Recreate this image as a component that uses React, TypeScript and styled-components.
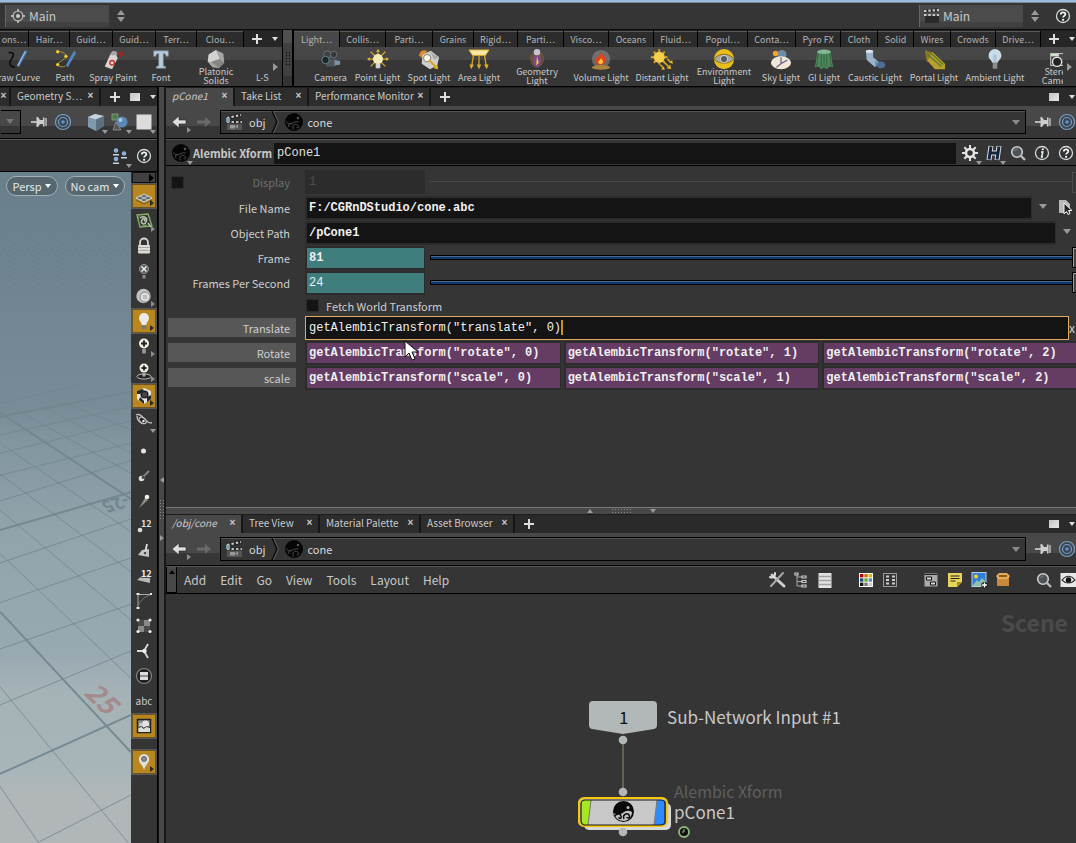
import React from "react";
import styled, { createGlobalStyle, css } from "styled-components";

const sans = '"Noto Sans CJK SC", "Open Sans", sans-serif';
const mono = '"Liberation Mono", "DejaVu Sans Mono", monospace';

const GlobalStyle = createGlobalStyle`
  * { box-sizing: border-box; }
  body { margin: 0; background: #353535; color: #c8c8c8; font-family: ${sans}; font-size: 11px; overflow: hidden; }
  button, input, select { font: inherit; color: inherit; border: 0; padding: 0; margin: 0; background: none; outline: none; border-radius: 0; }
  svg { display: block; flex: none; }
`;

/* ---------- icons ---------- */

const art: Record<string, React.ReactNode> = {
  gear: (
    <g fill="none" stroke="#e4e4e4">
      <circle cx="12" cy="12" r="4" strokeWidth="2.600" />
      <path strokeWidth="2" d="M12 4v4M12 16v4M4 12h4M16 12h4M6.300 6.300l3 3M14.700 14.700l3 3M17.700 6.300l-3 3M9.300 14.700l-3 3" />
      <circle cx="12" cy="12" r="1.600" fill="#333" stroke="none" />
    </g>
  ),
  desktop: (
    <g fill="none" stroke="#b4b4b4">
      <circle cx="12" cy="12" r="5" strokeWidth="1.200" />
      <circle cx="12" cy="12" r="2" fill="#ccc" stroke="none" />
      <path strokeWidth="1.800" d="M12 5v3M12 16v3M5 12h3M16 12h3" />
    </g>
  ),
  clapper: (
    <g>
      <path d="M4 11h15v9H4z" fill="#555" />
      <path d="M4 8l14-3" stroke="#222" strokeWidth="3.500" />
      <path d="M4 8l14-3" stroke="#ccc" strokeWidth="2" strokeDasharray="2.500 2" />
      <path d="M4 12h15" stroke="#222" strokeWidth="3" />
      <path d="M4 12h15" stroke="#bbb" strokeWidth="1.800" strokeDasharray="2.500 2" />
      <rect x="7" y="15" width="5" height="3.500" fill="#999" />
      <path d="M12 16.500l3-2v4z" fill="#999" />
      <rect x="3" y="8" width="4" height="4" fill="#7f9fae" />
    </g>
  ),
  slate: (
    <g>
      <path d="M5 12h14v7H5z" fill="#2a2a2a" />
      <path d="M4 7l14-1" stroke="#222" strokeWidth="3" />
      <path d="M4 7l15-1M4 11h15" stroke="#c8c8c8" strokeWidth="2.200" strokeDasharray="2.500 1.800" />
    </g>
  ),
  help: (
    <g>
      <circle cx="12" cy="12" r="6.500" fill="#2e3335" stroke="#d8d8d8" strokeWidth="1.300" />
      <path d="M9.800 10.500c0-3 4.600-2.800 4.500-.2 0 1.600-2.200 1.600-2.200 3.300" stroke="#f2f2f2" strokeWidth="1.800" fill="none" />
      <circle cx="12.100" cy="15.800" r="1.100" fill="#f2f2f2" />
    </g>
  ),
  info: (
    <g>
      <circle cx="12" cy="12" r="6.500" fill="#2e3335" stroke="#d8d8d8" strokeWidth="1.300" />
      <path d="M11 11h1.800l-1.200 5h1.400" stroke="#f2f2f2" strokeWidth="1.500" fill="none" />
      <circle cx="12.800" cy="8.300" r="1.100" fill="#f2f2f2" />
    </g>
  ),
  search: (
    <g>
      <path d="M15 15l4 4" stroke="#bbb" strokeWidth="2.400" />
      <circle cx="11" cy="11" r="5.300" fill="#4d5459" stroke="#cfcfcf" strokeWidth="1.600" />
      <path d="M8.500 10a3 3 0 0 1 3-2" stroke="#889" fill="none" />
    </g>
  ),
  houdini: (
    <g>
      <path d="M9 5L7 19M17 5l-2 14M8 12h8" stroke="#dde1e8" strokeWidth="5" fill="none" />
      <path d="M9 5.500L7 18.500M17 5.500l-2 13M8 12h8" stroke="#15243f" strokeWidth="3" fill="none" />
    </g>
  ),
  pin: (
    <g>
      <path d="M4 12h6" stroke="#ddd" strokeWidth="1.500" />
      <path d="M9.500 7h1.500l2 3h3V7.500h1.500v9H16V14h-3l-2 3H9.500z" fill="#cdcdcd" />
      <path d="M19 8v8" stroke="#bbb" strokeWidth="1.500" />
    </g>
  ),
  target: (
    <g fill="none" stroke="#7aa0c4">
      <circle cx="12" cy="12" r="7.500" strokeWidth="1.200" fill="#3c4650" />
      <circle cx="12" cy="12" r="4.500" strokeWidth="1.200" />
      <circle cx="12" cy="12" r="1.800" fill="#5b94d6" stroke="none" />
    </g>
  ),
  back: <path d="M4 12l7-6v4h7v4h-7v4z" fill="#dedede" stroke="#222" strokeWidth=".6" />,
  forward: <path d="M19 12l-6-5v3.500H5v3h8V17z" fill="#6a6a6a" />,
  alembic: (
    <g>
      <circle cx="12" cy="12" r="9" fill="#050505" />
      <circle cx="16" cy="8" r="1.200" fill="#5a5a5a" />
      <path d="M4.500 11.500c1 3 3 2.500 5 2s4-2.500 7-1.500M7 17c-1.500-2.500.5-4 2.500-3M11.500 19.500c-2-3.500 1-6.500 4-4.500s0 4-1 2" stroke="#4c4c4c" fill="none" />
    </g>
  ),
  cube: (
    <g>
      <path d="M4 7l7-3 9 2v10l-8 5-8-4z" fill="#7f9aab" />
      <path d="M4 7l8 2.500 8-3.500-9-2z" fill="#c3d2dc" />
      <path d="M12 9.500v11.500l8-5V6z" fill="#5b7182" />
    </g>
  ),
  shapes: (
    <g>
      <rect x="4" y="4" width="6" height="6" fill="#4c7a4a" stroke="#89a886" strokeWidth=".8" />
      <path d="M5 20l3-8 5 8z" fill="#555" stroke="#999" strokeWidth=".8" />
      <circle cx="14" cy="12" r="5.500" fill="#5c86b4" />
      <circle cx="12.500" cy="10" r="2" fill="#a9c6e4" />
    </g>
  ),
  whiteSquare: <rect x="4.500" y="4.500" width="15" height="15" fill="#dcdcdc" />,
  people: (
    <g fill="#8fb0d4">
      <circle cx="8" cy="6.500" r="2.300" />
      <circle cx="8" cy="15" r="2.300" />
      <circle cx="16" cy="9.500" r="2.300" />
      <path d="M5 10h6v1.500H5zM5 18.500h6V20H5zM13 13h6v1.500h-6z" fill="#c5d5e6" />
    </g>
  ),
  grid3d: (
    <g fill="none" stroke="#d8dad6">
      <path d="M4 14l8-4 8 4-8 4z" fill="#5e6a70" />
      <path d="M8 12l8 4M16 12l-8 4" strokeWidth=".8" />
      <path d="M4 16l8 4 8-4" stroke="#6b5a30" />
    </g>
  ),
  green: (
    <g fill="none">
      <path d="M5 6l11-1 4 12-12 1z" stroke="#84b06c" strokeWidth="1.300" />
      <path d="M8 9c4-3 8 0 6 4s-6 1-4-2 4 0 2 1M16 14l3 4" stroke="#b8c8ae" strokeWidth="1.500" />
      <path d="M7 7l-1 5M10 17l5-1" stroke="#6f9a58" />
    </g>
  ),
  lock: (
    <g>
      <path d="M8 12V8.500a4 4 0 0 1 8 0V12" fill="none" stroke="#d5d5d5" strokeWidth="1.800" />
      <rect x="6" y="11" width="12" height="8.500" rx="1" fill="#dedbd5" />
      <path d="M6 13.500h12M6 16.500h12" stroke="#9b9993" strokeWidth=".8" />
    </g>
  ),
  bulbOff: (
    <g>
      <circle cx="12" cy="10" r="4.500" fill="#525a5e" stroke="#999" />
      <path d="M9.500 7.500l5 5M14.500 7.500l-5 5" stroke="#eee" strokeWidth="1.600" />
      <path d="M10.500 16h3v3.500h-3z" fill="#888" />
    </g>
  ),
  sphere: (
    <g>
      <circle cx="11.500" cy="12" r="7.200" fill="#bfc3c3" />
      <circle cx="13" cy="13" r="5" fill="#ddd" stroke="#777" strokeWidth=".8" />
      <path d="M12 11v4M14 11v4" stroke="#999" />
    </g>
  ),
  bulb: (
    <g>
      <path d="M12 4a5 5 0 0 0-5 5c0 3 2.500 4 2.800 7h4.400c.3-3 2.800-4 2.800-7a5 5 0 0 0-5-5z" fill="#eceae6" />
      <path d="M10 16.500h4v3.500h-4z" fill="#777" />
    </g>
  ),
  bulbPlus: (
    <g>
      <circle cx="12" cy="9.500" r="5" fill="#eeecdc" />
      <path d="M12 6.500v6M9 9.500h6" stroke="#222" strokeWidth="2" />
      <path d="M10.200 15h3.600v4.500h-3.600z" fill="#999" />
    </g>
  ),
  bulbBase: (
    <g>
      <ellipse cx="12" cy="17.500" rx="7" ry="2.500" fill="#222" stroke="#bbb" />
      <circle cx="12" cy="9" r="4.500" fill="#eeecdc" />
      <path d="M12 6.500v5M9.500 9h5" stroke="#222" strokeWidth="1.800" />
      <path d="M10.500 14h3v3.500h-3z" fill="#aaa" />
    </g>
  ),
  ball: (
    <g>
      <path d="M12 4l7 3v8l-7 5-7-5V7z" fill="#e6e6e6" />
      <path d="M5 7l5-2 2 1-4 4-3 0zM19 11v4l-4 3v-5zM8 13l4 4v3l-5-4z" fill="#262626" />
      <circle cx="12.500" cy="10.500" r="3.300" fill="#444" stroke="#222" strokeWidth="1.500" />
    </g>
  ),
  ghost: (
    <g fill="none" stroke="#bbb" strokeWidth="1.300">
      <path d="M4 6c4-2 7 2 9 5 2 2 4 3 7 3M5 7c0 5 5 9 9 7" />
      <ellipse cx="11" cy="11.500" rx="4" ry="2.500" fill="#222" transform="rotate(35 11 11)" />
      <circle cx="11.500" cy="12" r="1.200" fill="#eee" stroke="none" />
    </g>
  ),
  point: <circle cx="11.500" cy="12" r="2.500" fill="#e4e4e4" />,
  normal: (
    <g>
      <path d="M9 15l8-8" stroke="#7f8686" strokeWidth="2" />
      <circle cx="9.500" cy="14.500" r="2.800" fill="#ddd" />
      <circle cx="11" cy="13.500" r="1.400" fill="#444" />
    </g>
  ),
  trail: (
    <g>
      <path d="M7 19l6-10 3 2z" fill="#8f908c" />
      <circle cx="15" cy="8" r="2.300" fill="#f0eee4" />
    </g>
  ),
  num: (
    <g>
      <text x="9" y="13" fontSize="9" fontWeight="700" fill="#ddd">12</text>
      <circle cx="8" cy="16" r="2.300" fill="#ddd" />
    </g>
  ),
  prim: (
    <g>
      <path d="M6 16l4-5 7-1v8z" fill="#c2c2be" />
      <path d="M13 14l2-9" stroke="#dcdcdc" strokeWidth="1.800" />
      <circle cx="13" cy="14" r="1.200" fill="#444" />
    </g>
  ),
  primNum: (
    <g>
      <path d="M5 16l6-5 7 0v8z" fill="#b8b8b4" />
      <text x="9" y="13" fontSize="9" fontWeight="700" fill="#eee" stroke="#353535" strokeWidth="1.500" paintOrder="stroke">12</text>
    </g>
  ),
  curve: (
    <g fill="none" stroke="#aaa">
      <path d="M6 19V5.500h13" />
      <path d="M6 17c2-5 6-9 12-11" stroke="#6f7a74" />
      <path d="M4.500 18h3v2h-3zM4.500 4h3v2h-3zM18 4h2v2h-2z" fill="#e8e8e8" stroke="none" />
    </g>
  ),
  hull: (
    <g>
      <rect x="6" y="6" width="12" height="12" fill="#4a4a4a" />
      <path d="M12 6h6v6h-6zM6 12h6v6H6z" fill="#8a8a8a" />
      <g fill="#eee">
        <circle cx="6" cy="6" r="1.600" /><circle cx="18" cy="6" r="1.600" />
        <circle cx="6" cy="17.500" r="1.600" /><circle cx="18" cy="17.500" r="1.600" />
      </g>
    </g>
  ),
  axes: (
    <g stroke="#d8d8d0" strokeWidth="1.800">
      <path d="M12 12H5M12 12l4-7M12 12l4 7" />
      <circle cx="12.500" cy="12" r="2.200" fill="#eee" stroke="none" />
    </g>
  ),
  list: (
    <g>
      <circle cx="12" cy="12" r="7.500" fill="#222" stroke="#7d857d" strokeWidth="1.200" />
      <path d="M8 8h8v8H8z" fill="#dcdcdc" />
      <path d="M8 12h8" stroke="#777" strokeWidth="1.500" />
    </g>
  ),
  photo: (
    <g>
      <rect x="5.500" y="5.500" width="13" height="13" fill="#8d8d8a" stroke="#222" strokeWidth="1.500" />
      <circle cx="13.500" cy="10" r="3.500" fill="#e4e4e4" />
      <circle cx="9" cy="11" r="2" fill="#ccc" />
      <path d="M6.500 13.500l3-1 2 2 3-2 3.500 1V18h-11.500z" fill="#dcdcd8" />
      <path d="M6.500 13.500l3-1 2 2 3-2 3.500 1" stroke="#333" fill="none" />
    </g>
  ),
  marker: (
    <g>
      <path d="M12 4a5.200 5.200 0 0 0-5.200 5.200C6.800 13 11 15 12 20c1-5 5.200-7 5.200-10.800A5.200 5.200 0 0 0 12 4z" fill="#e0e0de" />
      <circle cx="12" cy="9" r="2.500" fill="#8d8d89" stroke="#555" strokeWidth=".8" />
    </g>
  ),
  fileChooser: (
    <g>
      <path d="M7 4h7l4 4v9H7z" fill="#b9b9b9" />
      <path d="M12 7v11l2.500-2.500 1.500 3 2-1-1.500-3H20z" fill="#222" stroke="#f2f2f2" />
    </g>
  ),
  tools: (
    <g fill="none" strokeLinecap="round">
      <path d="M7 7l12 11" stroke="#d0d0d0" strokeWidth="3" />
      <path d="M18 5L6 18" stroke="#a8aaa8" strokeWidth="2" />
      <path d="M5 9a3.500 3.500 0 0 0 5-4" stroke="#e0e0e0" strokeWidth="2" />
    </g>
  ),
  tree: (
    <g fill="none" stroke="#aaa">
      <path d="M8 7v11M8 9h5M8 13.500h5M8 18h5" />
      <path d="M6 5h3v2H6zM13 8h4v2h-4zM13 12.500h4v2h-4zM13 17h4v2h-4z" strokeWidth="1.200" stroke="#ccc" />
    </g>
  ),
  lines: (
    <g>
      <rect x="5.500" y="5" width="13" height="15" fill="#e2e2e2" />
      <path d="M5.500 8.500h13M5.500 12.500h13M5.500 16.500h13" stroke="#a2a2a2" strokeWidth="1.500" />
    </g>
  ),
  palette: (
    <g>
      <rect x="5" y="5" width="14" height="14" fill="#fff" />
      {["#b00", "#d86a10", "#d8b800", "#234a80", "#68b020", "#5c8cc0", "#111", "#777", "#ccc"].map((c, i) => (
        <rect key={i} x={6 + (i % 3) * 4.3} y={6 + Math.floor(i / 3) * 4.3} width="3.400" height="3.400" fill={c} />
      ))}
    </g>
  ),
  table: (
    <g fill="none">
      <rect x="5.500" y="5.500" width="13" height="13" stroke="#999" />
      <path d="M8 8.500h3M14 8.500h3M8 12h3M14 12h3M8 15.500h3M14 15.500h3" stroke="#ccc" strokeWidth="2" />
    </g>
  ),
  netbox: (
    <g>
      <rect x="5.500" y="5.500" width="13" height="13" fill="#aaa" />
      <path d="M5.500 6.500h13" stroke="#222" />
      <path d="M7.500 9h5v3h-5zM11.500 14h5v3h-5z" fill="#ddd" stroke="#111" />
    </g>
  ),
  note: (
    <g>
      <path d="M5 5h14v9l-5 5H5z" fill="#e8d35c" />
      <path d="M19 14h-5v5z" fill="#a88c20" />
      <path d="M7.500 8h9M7.500 10.500h9M7.500 13h5" stroke="#222" strokeWidth="1.200" />
    </g>
  ),
  image: (
    <g>
      <rect x="5" y="4.500" width="14" height="14" fill="#2f7ed8" stroke="#bcd" />
      <circle cx="9" cy="8.500" r="2" fill="#f4d22a" />
      <path d="M6 17l4-5 2 2 3-4 3 3v5H6z" fill="#8fbfae" />
      <path d="M17.500 14v6M14.500 17h6" stroke="#111" strokeWidth="3.500" />
      <path d="M17.500 14.500v5M15 17h5" stroke="#fff" strokeWidth="1.500" />
    </g>
  ),
  box: (
    <g>
      <path d="M6 10h12v8H6z" fill="#c88a3a" />
      <path d="M5 8l3-3h8l3 3-2 3H7z" fill="#e2ac5c" />
      <path d="M8 7h8v2H8z" fill="#8a5a1c" />
    </g>
  ),
  eye: (
    <g>
      <rect x="4.500" y="5" width="16" height="14" fill="#e8e8e8" />
      <path d="M6 12c4-5 9-5 13 0-4 4-9 4-13 0z" fill="#fff" stroke="#333" strokeWidth="1.200" />
      <circle cx="12.500" cy="12" r="2.800" fill="#111" />
    </g>
  ),
  /* shelf tools */
  drawCurve: (
    <g fill="none">
      <path d="M4 4c8-1 5 4 3 7s-4 8 4 9" stroke="#0c0c0c" strokeWidth="1.800" />
      <path d="M23 2L14 19" stroke="#4f88c4" strokeWidth="3" />
      <path d="M22 3L14 18" stroke="#a9cbee" />
    </g>
  ),
  path: (
    <g fill="none">
      <path d="M4 3c6-1 12 4 7 8s-7 4-7 6 4 3 8 2" stroke="#b49a3a" />
      <path d="M23 3l-9 16" stroke="#4f88c4" strokeWidth="3" />
      <g fill="#f2cf22"><circle cx="4" cy="3" r="1.800" /><circle cx="13" cy="8" r="1.800" /><circle cx="4" cy="17" r="1.800" /></g>
    </g>
  ),
  spray: (
    <g>
      <path d="M9 6l6-1 2 5-6 12-8-3z" fill="#d8d6d2" />
      <path d="M9 5l3-3 4 1 1 3-6 1z" fill="#a6a6a6" />
      <path d="M17 4l7-1-3 7z" fill="#a82420" />
      <circle cx="11" cy="15" r="2.500" fill="none" stroke="#c2332c" strokeWidth="1.500" />
    </g>
  ),
  font: <path d="M4 2h16v6h-2.500c0-2-1-3-3-3v13.500l2.500.5v2H7v-2l2.500-.5V5c-2 0-3 1-3 3H4z" fill="#b8cbd8" stroke="#6f8695" strokeWidth=".8" />,
  platonic: (
    <g>
      <path d="M12 1l8 4 1 10-6 6-7-1-5-6 1-8z" fill="#a5a6a4" />
      <path d="M12 1l4 10-9 3-4 0 1-8z" fill="#d2d3d0" />
      <path d="M16 11l5 4-6 6-8-7z" fill="#868785" />
    </g>
  ),
  lsystem: <path d="M8 4v4l2 3-3 3 2 3-2 3" stroke="#3a6fae" strokeWidth="2" fill="none" />,
  camera: (
    <g>
      <circle cx="8" cy="6" r="4" fill="#3b4146" stroke="#6d767c" />
      <circle cx="15" cy="6" r="3.500" fill="#31363a" stroke="#6d767c" />
      <path d="M5 11h12v8H7z" fill="#4d565d" />
      <path d="M16 12l6 1v4l-6 1z" fill="#7a96ab" />
      <circle cx="6" cy="12" r="4" fill="#1e2326" stroke="#6a8596" />
    </g>
  ),
  pointLight: (
    <g>
      <path d="M12 1v20M1 11h22M4 3l16 16M20 3L4 19" stroke="#d6ac2a" strokeWidth="1.300" />
      <path d="M12 0l2 3h-4zM0 11l3-2v4zM24 11l-3-2v4z" fill="#e2b82c" />
      <circle cx="12" cy="11" r="5.500" fill="#f4ecb8" />
      <path d="M9.500 16h5v5h-5z" fill="#d5d5cf" />
    </g>
  ),
  spotLight: (
    <g>
      <path d="M1 7c1-5 5-7 9-5l-5 8z" fill="#e08a2a" />
      <path d="M5 6l9-4 9 7-2 9-8 4-9-6z" fill="#cfd0cc" />
      <path d="M13 3l9 6-4 3z" fill="#a9aaa7" />
      <circle cx="10" cy="10" r="4" fill="#fbf8e6" stroke="#777" />
      <path d="M12 12l8 8" stroke="#d8a41c" strokeWidth="2" />
      <path d="M22 22l-5-1 4-4z" fill="#e8b828" />
    </g>
  ),
  areaLight: (
    <g>
      <path d="M1 1h22l-4 6H5z" fill="#f6e8a8" stroke="#d8aa22" />
      <path d="M6 7l-2 12M12 7v13M18 7l2 12" stroke="#d0a024" strokeWidth="1.500" />
      <path d="M1.500 17h5L3.500 22zM9.500 17h5L12 22zM17.500 17h5L20.500 22z" fill="#dcae2c" />
    </g>
  ),
  geoLight: (
    <g>
      <ellipse cx="12" cy="11" rx="8" ry="9" fill="#7a5c34" opacity=".6" />
      <circle cx="12" cy="3.500" r="3.500" fill="#c9c4d4" />
      <path d="M9 7h6l2 6-3 7h-4l-3-7z" fill="#7c4a86" />
      <path d="M12 8l2 7-3 3z" fill="#f0c648" />
    </g>
  ),
  volumeLight: (
    <g>
      <circle cx="12" cy="11" r="10" fill="#8a8a8a" opacity=".6" />
      <ellipse cx="12" cy="20" rx="10" ry="2.500" fill="#a8843c" />
      <path d="M12 3c1 4 6 5 5 10-1 6-10 6-11 0 0-3 2-4 2-6l2 2z" fill="#e4421a" />
      <path d="M12 10c1 2 3 3 2 5-1 2-5 2-5-1 0-1 2-2 3-4z" fill="#fbc842" />
    </g>
  ),
  distantLight: (
    <g>
      <path d="M9 0v17M0 9h18M3 3l12 12M15 3L3 15" stroke="#d8a41c" strokeWidth="2" />
      <circle cx="9" cy="9" r="6" fill="#f6cf48" />
      <path d="M14 14l5 5M18 11l4 4M10 17l4 4" stroke="#d8a41c" strokeWidth="1.800" />
      <path d="M22 22l-5-1 4-4zM24 16l-4-1 3-3zM15 23l-4-1 3-3z" fill="#e2b22a" />
    </g>
  ),
  envLight: (
    <g>
      <circle cx="12" cy="11" r="11" fill="#e8bd1c" />
      <path d="M1 11c5-7 17-7 22 0-5 6-17 6-22 0z" fill="#a8a8a2" stroke="#8f6a08" />
      <circle cx="12" cy="11" r="4" fill="#555a5c" stroke="#ddd" />
    </g>
  ),
  skyLight: (
    <g>
      <circle cx="13" cy="6" r="5" fill="#6d8ba4" />
      <circle cx="6" cy="5" r="3" fill="#f2a52a" />
      <ellipse cx="12" cy="15" rx="11" ry="7" fill="#eee8d4" />
      <path d="M12 16V9M12 16l7-4M12 16l-5 4" stroke="#7a5c96" strokeWidth="1.400" />
    </g>
  ),
  giLight: (
    <g>
      <path d="M5 3h14l3 17-4-1-3 3-3-2-3 2-3-3-4 1z" fill="#4f8a5c" />
      <path d="M9 5v15M15 5v15M12 5v14M6 5L4 19M18 5l2 14" stroke="#335f3e" />
      <ellipse cx="12" cy="3" rx="7.500" ry="2.500" fill="#86b892" />
    </g>
  ),
  causticLight: (
    <g>
      <path d="M2 2h8v7l6 5-4 6-9-8z" fill="#9bb4cc" />
      <ellipse cx="6" cy="2.500" rx="4" ry="1.800" fill="#dce8f2" />
      <path d="M12 13l9 1c4 3 2 8-4 7l-5-3z" fill="#5b86b8" opacity=".7" />
    </g>
  ),
  portalLight: (
    <g>
      <path d="M2 1l8 3v10H4z" fill="#8a7a22" />
      <path d="M10 3l14 13v6l-11 0-8-9z" fill="#b8a02c" />
      <path d="M5 6l15 13M9 5l13 12" stroke="#5a7a2a" strokeWidth="1.500" />
    </g>
  ),
  ambientLight: (
    <g>
      <path d="M12 0a7 7 0 0 0-7 7C5 11 8.500 12 9 15h6c.5-3 4-4 4-8a7 7 0 0 0-7-7z" fill="#c9dcea" />
      <path d="M9.500 15h5v6.500h-5z" fill="#8c8c88" />
      <path d="M11 6v9M13 6v9" stroke="#8fa4b4" strokeWidth=".8" />
    </g>
  ),
  stereo: (
    <g>
      <rect x="4" y="5" width="18" height="13" fill="#4c4c4c" stroke="#c8c8c8" />
      <path d="M4 5h9v3H4z" fill="#cfe0cc" />
      <circle cx="11" cy="14" r="5" fill="#222" stroke="#e2e2e2" strokeWidth="1.500" />
    </g>
  ),
};

const Icon = ({ name, size = 24 }: { name: string; size?: number }) => (
  <svg width={size} height={size} viewBox="0 0 24 24" aria-hidden="true">{art[name]}</svg>
);

/* ---------- shared parts ---------- */

const Triangle = styled.i<{ $dir?: "down" | "up" | "right" | "left"; $size?: number; $color?: string }>`
  width: 0;
  height: 0;
  flex: none;
  border: ${p => p.$size ?? 4}px solid transparent;
  ${p => {
    const c = p.$color ?? "#9a9a9a";
    const s = (p.$size ?? 4) + 1;
    switch (p.$dir) {
      case "up": return css`border-bottom: ${s}px solid ${c}; border-top: 0;`;
      case "right": return css`border-left: ${s}px solid ${c}; border-right: 0;`;
      case "left": return css`border-right: ${s}px solid ${c}; border-left: 0;`;
      default: return css`border-top: ${s}px solid ${c}; border-bottom: 0;`;
    }
  }}
`;

const IconSlot = styled.button<{ $on?: boolean }>`
  position: relative;
  display: flex;
  flex: none;
  align-items: center;
  justify-content: center;
  width: 24px;
  height: 24px;
  background: ${p => (p.$on ? "#b8871f" : "none")};
  ${p => p.$on && css`border: 1px solid #6b5426; box-shadow: 0 0 0 1px #595959;`}
`;

const Corner = styled.span<{ $side?: boolean }>`
  position: absolute;
  right: ${p => (p.$side ? "1px" : "0")};
  bottom: ${p => (p.$side ? "1px" : "0")};
  display: flex;
`;

const IconButton = ({ name, menu, side, on, dark }: { name: string; menu?: boolean; side?: boolean; on?: boolean; dark?: boolean }) => (
  <IconSlot type="button" aria-label={name} $on={on}>
    <Icon name={name} />
    {menu && <Corner><Triangle $size={3} /></Corner>}
    {side && <Corner $side><Triangle $dir="right" $size={3} $color={dark ? "#2a2a2a" : "#8f8f8f"} /></Corner>}
  </IconSlot>
);

const Plus = styled.button`
  width: 12px;
  height: 16px;
  flex: none;
  background:
    linear-gradient(#dedede, #dedede) center / 10px 2px no-repeat,
    linear-gradient(#dedede, #dedede) center / 2px 10px no-repeat;
`;

const DropButton = styled.button`
  display: flex;
  align-items: center;
  justify-content: center;
  flex: none;
  width: 18px;
  height: 20px;
`;

/* ---------- frame ---------- */

const Shell = styled.div`
  display: flex;
  flex-direction: column;
  height: 100vh;
  overflow: hidden;
`;

const WindowEdge = styled.div`
  flex: none;
  height: 3px;
  background: linear-gradient(#9dbbe0 2px, #7d8895 2px);
`;

const TopBar = styled.header`
  display: flex;
  align-items: center;
  flex: none;
  height: 27px;
  padding: 0 1px 0 5px;
  background: #353535;
  border-bottom: 1px solid #0a0a0a;
`;

const HelpSlot = styled.div`
  margin-left: 4px;
`;

const DesktopPick = styled.label`
  position: relative;
  display: flex;
  align-items: center;
  width: 104px;
  height: 22px;
  background: linear-gradient(#4b4b4b 17px, #414141 17px);
  border-left: 1px solid #666;
  svg { position: absolute; left: 0; pointer-events: none; }
`;

const DesktopSelect = styled.select`
  appearance: none;
  width: 100%;
  padding-left: 23px;
  font-size: 12px;
  line-height: 20px;
`;

const Stepper = styled.button`
  display: flex;
  flex-direction: column;
  align-items: center;
  justify-content: center;
  gap: 2px;
  width: 24px;
  height: 22px;
`;

const Spacer = styled.div`flex: 1;`;

const Shelves = styled.div`
  display: flex;
  flex: none;
  height: 57px;
  background: #000;
  border-bottom: 1px solid #000;
`;

const Shelf = styled.section<{ $w?: number }>`
  display: flex;
  flex-direction: column;
  min-width: 0;
  overflow: hidden;
  ${p => (p.$w ? css`flex: none; width: ${p.$w}px;` : css`flex: 1;`)}
`;

const ShelfTabs = styled.div`
  display: flex;
  flex: none;
  gap: 1px;
  height: 17px;
  padding-top: 1px;
  background: #202020;
`;

const ShelfTab = styled.button<{ $w: number; $active?: boolean }>`
  flex: none;
  width: ${p => p.$w}px;
  background: ${p => (p.$active ? "#484848" : "#2c2c2c")};
  border-top: 1px solid #5a5a5a;
  box-shadow: 1px 0 #000;
  font-size: 9px;
  line-height: 14px;
  text-align: center;
  color: #b4b4b4;
`;

const ShelfAdd = styled.div`
  display: flex;
  align-items: center;
  flex: 1;
  gap: 9px;
  padding-left: 7px;
  background: #262626;
`;

const ShelfBody = styled.div`
  display: flex;
  flex: 1;
  align-items: center;
  background: linear-gradient(#464646 13px, #363636 13px);
`;

const ToolList = styled.div<{ $scroll?: number }>`
  display: flex;
  flex: 1;
  min-width: 0;
  height: 100%;
  overflow: hidden;
  padding-left: ${p => (p.$scroll ? 0 : 16)}px;
  > :first-child { margin-left: ${p => -(p.$scroll ?? 0)}px; }
`;

const Tool = styled.button<{ $w: number; $tall?: boolean }>`
  display: flex;
  flex: none;
  flex-direction: column;
  align-items: center;
  justify-content: flex-start;
  width: ${p => p.$w}px;
  padding-top: 2px;
  font-size: 9px;
  line-height: ${p => (p.$tall ? 9 : 14)}px;
  color: #c8c8c8;
  white-space: pre;
  svg { margin-bottom: ${p => (p.$tall ? -4 : 0)}px; }
`;

const ScrollEnd = styled.button`
  display: flex;
  align-items: center;
  justify-content: center;
  width: 13px;
  height: 100%;
`;

const ShelfSplit = styled.div`
  display: flex;
  align-items: center;
  justify-content: center;
  flex: none;
  width: 9px;
  margin: 0 2px 0 1px;
  background: linear-gradient(#505050 13px, #404040 13px, #404040 46px, #333 46px);
`;

const Dots = styled.div<{ $w: number; $h: number; $color?: string }>`
  width: ${p => p.$w}px;
  height: ${p => p.$h}px;
  background: radial-gradient(circle, ${p => p.$color ?? "#000"} 1px, transparent 1px) 0 0 / 3px 3px;
`;

/* ---------- panes ---------- */

const Workspace = styled.div`
  display: flex;
  flex: 1;
  min-height: 0;
`;

const LeftPane = styled.section`
  display: flex;
  flex-direction: column;
  flex: none;
  width: 158px;
  border-right: 1px solid #000;
`;

const VerticalSplit = styled.div`
  display: flex;
  flex-direction: column;
  align-items: center;
  justify-content: center;
  gap: 16px;
  flex: none;
  width: 8px;
  padding-top: 88px;
  background: #484848;
  border-right: 2px solid #181818;
  border-left: 1px solid #111;
`;

const RightColumn = styled.main`
  display: flex;
  flex-direction: column;
  flex: 1;
  min-width: 0;
`;

const Pane = styled.section<{ $share: number }>`
  position: relative;
  display: flex;
  flex-direction: column;
  flex: ${p => p.$share} 1 0;
  min-height: 0;
  overflow: hidden;
`;

const HorizontalSplit = styled.div`
  display: flex;
  align-items: center;
  justify-content: center;
  gap: 18px;
  flex: none;
  height: 7px;
  background: #484848;
  border-top: 1px solid #7a7a7a;
`;

const PaneTabs = styled.div`
  display: flex;
  align-items: stretch;
  flex: none;
  height: 19px;
  background: #2a2a2a;
  border-top: 1px solid #1c1c1c;
`;

const PaneTab = styled.div<{ $w: number; $active?: boolean; $cut?: boolean }>`
  display: flex;
  align-items: center;
  justify-content: ${p => (p.$cut ? "flex-start" : "space-between")};
  flex: none;
  width: ${p => p.$w}px;
  padding: 0 ${p => (p.$cut ? 0 : 5)}px 2px ${p => (p.$cut ? 0 : 6)}px;
  background: ${p => (p.$active ? "#484848" : "#2d2d2d")};
  border-right: 2px solid #161616;
  font-style: ${p => (p.$active ? "italic" : "normal")};
  font-size: 10px;
  line-height: 16px;
  white-space: nowrap;
  color: #cacaca;
`;

const Close = styled.button`
  width: 7px;
  font-family: "Liberation Sans", sans-serif;
  font-size: 10px;
  font-style: normal;
  font-weight: 700;
  line-height: 16px;
`;

const TabAdd = styled.div`
  display: flex;
  align-items: center;
  padding: 0 0 1px 8px;
`;

const PaneMenu = styled.div`
  display: flex;
  align-items: center;
  justify-content: flex-end;
  gap: 10px;
  flex: 1;
  padding-right: 1px;
`;

const Maximise = styled.button`
  width: 10px;
  height: 8px;
  background: linear-gradient(135deg, #c4c4c4, #e8e8e8);
`;

const PathBar = styled.div<{ $compact?: boolean }>`
  display: flex;
  align-items: center;
  flex: none;
  height: 33px;
  margin-right: ${p => (p.$compact ? 0 : -3)}px;
  padding: 0 ${p => (p.$compact ? 1 : 0)}px 0 ${p => (p.$compact ? 1 : 2)}px;
  background: linear-gradient(#484848 20px, #363636 20px);
  border-bottom: 1px solid #000;
`;

const CutPath = styled.div`
  width: 20px;
  height: 24px;
  margin-right: 6px;
  border: 1px solid #000;
  border-left: 0;
`;

const PathBox = styled.nav`
  display: flex;
  align-items: center;
  flex: 1;
  height: 24px;
  margin: 0 5px 0 4px;
  padding-left: 2px;
  background: #353535;
  border: 1px solid #000;
  box-shadow: inset 0 1px #555;
`;

const Crumb = styled.a`
  display: flex;
  align-items: center;
  gap: 2px;
  font-size: 11px;
  line-height: 20px;
  color: #d8d8d8;
  text-decoration: none;
`;

const Chevron = () => (
  <svg width="16" height="22" viewBox="0 0 16 22" fill="none" aria-hidden="true">
    <path d="M6 0l5 11-5 11" stroke="#0c0c0c" strokeWidth="1.500" />
    <path d="M7.500 0l5 11-5 11" stroke="#5c5c5c" />
  </svg>
);

/* ---------- 3D view ---------- */

const ViewHeader = styled.div`
  display: flex;
  align-items: center;
  justify-content: flex-end;
  flex: none;
  height: 33px;
  padding-right: 1px;
  background: #2d2d2d;
  border-top: 1px solid #555;
  border-bottom: 1px solid #000;
`;

const ViewRow = styled.div`
  display: flex;
  flex: 1;
  min-height: 0;
`;

const View = styled.div`
  position: relative;
  flex: 1;
  min-width: 0;
  overflow: hidden;
  background: linear-gradient(#697f8b, #778c97 233px, #8296a0 270px, #92a3ab 358px, #99a9b1 480px, #a5b3b7 520px, #a7b5b9 595px, #b1b7b8 625px);
`;

const ViewPills = styled.div`
  position: absolute;
  top: 4px;
  left: 6px;
  display: flex;
  gap: 7px;
`;

const Pill = styled.button<{ $w: number }>`
  display: flex;
  align-items: center;
  justify-content: center;
  gap: 4px;
  width: ${p => p.$w}px;
  height: 20px;
  border: 1px solid #a2afb6;
  border-radius: 10px;
  background: #566770;
  font-size: 11px;
  line-height: 16px;
  color: #e4e8ea;
  white-space: nowrap;
`;

const Strip = styled.div`
  display: flex;
  flex-direction: column;
  align-items: center;
  gap: 1px;
  flex: none;
  width: 26px;
  overflow: hidden;
  background: #353535;
`;

const StripTop = styled.button`
  display: flex;
  align-items: center;
  justify-content: flex-end;
  flex: none;
  width: 24px;
  height: 11px;
  padding-right: 1px;
  border: 1px solid #111;
  background: #404040;
`;

const StripGap = styled.div<{ $h: number }>`
  flex: none;
  height: ${p => p.$h}px;
`;

const StripText = styled.button`
  flex: none;
  height: 24px;
  font-size: 10px;
  line-height: 24px;
`;

const thin = ["M0 85L240 30", "M0 180L393 95", "M0 235L393 138", "M0 301L393 204", "M0 378L393 257", "M0 564L393 432", "M0 683L393 549", "M0 822L393 688", "M0 990L393 828", "M115 1402L393 1260",
  "M0 205L393 470", "M0 297L393 590", "M0 405L393 735", "M0 535L393 910", "M0 935L385 1404", "M0 1235L115 1402", "M50 105L393 295", "M130 95L393 235", "M200 85L393 165"];
const thick = ["M0 125L393 50", "M0 465L393 352", "M0 1197L393 1020", "M0 113L393 372", "M0 710L393 1132"];

const GroundGrid = () => (
  <svg width="131" height="671" viewBox="0 0 131 671" aria-hidden="true">
    <defs>
      <pattern id="haze" width="12" height="10" patternUnits="userSpaceOnUse">
        <path d="M0 2h4M6 4h5M2 7h4M8 9h4" stroke="#64788a" strokeWidth=".8" />
      </pattern>
      <linearGradient id="fade" x1="0" y1="0" x2="0" y2="1">
        <stop offset="0" stopColor="#fff" stopOpacity="0" />
        <stop offset=".5" stopColor="#fff" stopOpacity=".7" />
        <stop offset="1" stopColor="#fff" stopOpacity="0" />
      </linearGradient>
      <mask id="hazeMask"><rect y="22" width="131" height="115" fill="url(#fade)" /></mask>
    </defs>
    <rect y="22" width="131" height="115" fill="url(#haze)" mask="url(#hazeMask)" />
    <g transform="translate(0 203) scale(.3333)" stroke="#71858f" fill="none">
      <path d={thin.join("")} strokeWidth="3" opacity=".8" />
      <path d={thick.join("")} strokeWidth="6" opacity=".9" />
    </g>
    <text transform="translate(83 522) rotate(44) skewX(-16)" fontSize="27" fontWeight="700" fill="#a58a8c">25</text>
    <text transform="translate(125 323) rotate(164) skewX(20)" fontSize="17" fontWeight="700" fill="#71858f">-25</text>
  </svg>
);

/* ---------- parameters ---------- */

const ParmHeader = styled.div`
  display: flex;
  align-items: center;
  flex: none;
  height: 27px;
  margin-right: -2px;
  padding: 1px 0 0 3px;
  border-top: 1px solid #555;
  border-bottom: 1px solid #000;
  label { font-size: 11px; font-weight: 700; line-height: 20px; white-space: nowrap; }
`;

const NameInput = styled.input`
  flex: 1;
  min-width: 0;
  height: 21px;
  margin: 0 2px 0 2px;
  padding-left: 3px;
  background: #141414;
  font-family: ${mono};
  font-size: 12px;
  color: #e0e0e0;
`;

const Parms = styled.form`
  display: flex;
  flex-direction: column;
  padding: 4px 0 0 2px;
`;

const ParmRow = styled.div<{ $h?: number; $dim?: boolean }>`
  display: flex;
  flex: none;
  height: ${p => p.$h ?? 25}px;
  color: ${p => (p.$dim ? "#6e6e6e" : "#cecece")};
`;

const ParmLabel = styled.div<{ $bar?: boolean }>`
  display: flex;
  align-items: center;
  flex: none;
  width: 128px;
  height: ${p => (p.$bar ? 19 : 24)}px;
  margin: ${p => (p.$bar ? "2px" : "0")} 9px 0 0;
  padding: 0 6px 0 3px;
  background: ${p => (p.$bar ? "#575757" : "none")};
  font-size: 11px;
  line-height: 18px;
  label { margin-left: auto; white-space: nowrap; }
`;

const Check = styled.input.attrs({ type: "checkbox" })`
  appearance: none;
  flex: none;
  width: 13px;
  height: 13px;
  background: #141414;
  border: 1px solid #2b2b2b;
`;

const FetchLabel = styled.label`
  display: flex;
  align-items: center;
  gap: 7px;
  padding: 0 0 1px 1px;
  font-size: 11px;
  line-height: 18px;
`;

type Tone = "plain" | "teal" | "purple" | "off" | "edit";
const tones: Record<Tone, string> = { plain: "#141414", teal: "#407e7e", purple: "#643c64", off: "#2c2c2c", edit: "#141414" };

const Field = styled.input<{ $tone?: Tone; $w?: number; $bold?: boolean }>`
  min-width: 0;
  height: 24px;
  ${p => (p.$w ? css`flex: none; width: ${p.$w}px;` : css`flex: 1; width: 100%;`)}
  padding: 0 2px;
  background: ${p => tones[p.$tone ?? "plain"]};
  border: 2px solid #2c2c2c;
  border-right-width: 1px;
  ${p => p.$tone === "edit" && css`border: 1px solid #e0ac5c; padding: 0 3px;`}
  font-family: ${mono};
  font-size: 12px;
  line-height: 20px;
  font-weight: ${p => (p.$bold ? 700 : 400)};
  color: ${p => (p.$tone === "off" ? "#4c4c4c" : "#f0f0f0")};
`;

const FieldMenu = styled(DropButton)`
  margin: 0 0 0 2px;
`;

const Slider = styled.input.attrs({ type: "range" })`
  appearance: none;
  flex: 1;
  min-width: 0;
  height: 23px;
  margin: 0 -8px 0 5px;
  &::-webkit-slider-runnable-track {
    height: 5px;
    background: linear-gradient(#4c6a86 1px, #0c3a70 1px);
    border: solid #000;
    border-width: 1px 0 1px 1px;
  }
  &::-webkit-slider-thumb {
    appearance: none;
    width: 12px;
    height: 21px;
    margin-top: -9px;
    background: #444;
    border: 1px solid #000;
    box-shadow: inset 1px 1px #999;
  }
  &:disabled::-webkit-slider-runnable-track { height: 1px; background: #4a4a4a; border: 0; }
  &:disabled::-webkit-slider-thumb { margin-top: -9px; background: #353535; border-color: #4a4a4a; box-shadow: none; }
`;

const Triple = styled.div`
  display: grid;
  grid-template-columns: repeat(3, 1fr);
  gap: 3px;
  flex: 1;
  margin-right: -2px;
`;

const EditBox = styled.div`
  position: relative;
  flex: 1;
  display: flex;
  font-family: ${mono};
  font-size: 12px;
`;

const Caret = styled.i`
  position: absolute;
  top: 4px;
  left: calc(35ch + 4px);
  width: 2px;
  height: 15px;
  background: #c8901c;
`;

const Unit = styled.span`
  width: 7px;
  line-height: 24px;
  font-size: 12px;
`;

const Pointer = styled.svg`
  position: absolute;
  top: 253px;
  left: 238px;
`;

/* ---------- network ---------- */

const MenuRow = styled.div`
  display: flex;
  align-items: stretch;
  flex: none;
  height: 28px;
  overflow: hidden;
  border-top: 1px solid #555;
  border-bottom: 1px solid #000;
`;

const MenuGrip = styled.button`
  display: flex;
  justify-content: center;
  flex: none;
  width: 11px;
  padding-top: 3px;
  background: #484848;
  border: 1px solid #000;
  border-top: 0;
`;

const Menus = styled.div`
  display: flex;
  align-items: center;
  gap: 14px;
  padding-left: 7px;
  font-size: 12px;
  line-height: 20px;
`;

const IconGroups = styled.div`
  display: flex;
  align-items: center;
  gap: 17px;
  margin: 0 -4px 0 auto;
`;

const IconGroup = styled.div`display: flex;`;

const Canvas = styled.div`
  position: relative;
  flex: 1;
  overflow: hidden;
  background: #353535;
`;

const SceneMark = styled.div`
  position: absolute;
  top: 13px;
  right: 8px;
  font-size: 23px;
  font-weight: 700;
  line-height: 30px;
  color: #4b4b4b;
`;

const Graph = styled.svg`
  position: absolute;
  top: 106px;
  left: 412px;
`;

const NodeText = styled.div<{ $x: number; $y: number; $dim?: boolean }>`
  position: absolute;
  top: ${p => p.$y}px;
  left: ${p => p.$x}px;
  font-size: ${p => (p.$dim ? 16 : 17)}px;
  line-height: 20px;
  white-space: nowrap;
  color: ${p => (p.$dim ? "#5f5f5f" : "#c8c8c8")};
`;

const InputNumber = styled.span`color: #111;`;

const TimeBadge = styled.svg`
  position: absolute;
  top: 231px;
  left: 511px;
`;

/* ---------- data ---------- */

type TabData = [string, number];
const leftShelfTabs: TabData[] = [["ons…", 28], ["Hair…", 40], ["Guid…", 42], ["Guid…", 42], ["Terr…", 40], ["Clou…", 46]];
const rightShelfTabs: TabData[] = [["Light…", 45], ["Collis…", 45], ["Parti…", 46], ["Grains", 40], ["Rigid…", 43], ["Parti…", 45], ["Visco…", 44], ["Oceans", 44], ["Fluid…", 43], ["Popul…", 49], ["Conta…", 47], ["Pyro FX", 44], ["Cloth", 36], ["Solid", 35], ["Wires", 36], ["Crowds", 44], ["Drive…", 44]];

type ToolData = [string, string, number];
const leftTools: ToolData[] = [["Draw Curve", "drawCurve", 60], ["Path", "path", 38], ["Spray Paint", "spray", 58], ["Font", "font", 38], ["Platonic\nSolids", "platonic", 72], ["L-System", "lsystem", 46]];
const rightTools: ToolData[] = [["Camera", "camera", 41], ["Point Light", "pointLight", 53], ["Spot Light", "spotLight", 50], ["Area Light", "areaLight", 50], ["Geometry\nLight", "geoLight", 66], ["Volume Light", "volumeLight", 62], ["Distant Light", "distantLight", 60], ["Environment\nLight", "envLight", 64], ["Sky Light", "skyLight", 50], ["GI Light", "giLight", 36], ["Caustic Light", "causticLight", 66], ["Portal Light", "portalLight", 52], ["Ambient Light", "ambientLight", 70], ["Stereo\nCamera", "stereo", 56]];

const Tools = ({ items, scroll }: { items: ToolData[]; scroll?: number }) => (
  <ShelfBody>
    <ToolList $scroll={scroll}>
      {items.map(([label, icon, w]) => (
        <Tool key={label} type="button" $w={w} $tall={label.includes("\n")}>
          <Icon name={icon} size={22} />
          {label}
        </Tool>
      ))}
    </ToolList>
    <ScrollEnd type="button" aria-label="More tools"><Triangle $dir="right" /></ScrollEnd>
  </ShelfBody>
);

const ShelfHead = ({ tabs, active }: { tabs: TabData[]; active?: number }) => (
  <ShelfTabs>
    {tabs.map(([label, w], i) => <ShelfTab key={i} type="button" $w={w} $active={i === active}>{label}</ShelfTab>)}
    <ShelfAdd>
      <Plus type="button" aria-label="Add shelf" />
      <Triangle $color="#dedede" $size={3} />
    </ShelfAdd>
  </ShelfTabs>
);

const Tabs = ({ tabs }: { tabs: TabData[] }) => (
  <PaneTabs>
    {tabs.map(([label, w], i) => (
      <PaneTab key={label} $w={w} $active={i === 0}>
        <button type="button">{label}</button>
        <Close type="button" aria-label={`Close ${label}`}>×</Close>
      </PaneTab>
    ))}
    <TabAdd><Plus type="button" aria-label="Add tab" /></TabAdd>
    <PaneMenu>
      <Maximise type="button" aria-label="Maximise pane" />
      <Triangle $color="#dedede" $size={3} />
    </PaneMenu>
  </PaneTabs>
);

const Path = () => (
  <PathBar>
    <IconButton name="back" side />
    <IconButton name="forward" />
    <PathBox aria-label="Network path">
      <Crumb href="#obj"><Icon name="clapper" />obj</Crumb>
      <Chevron />
      <Crumb href="#cone"><Icon name="alembic" />cone</Crumb>
      <Spacer />
      <DropButton type="button" aria-label="Path history"><Triangle $color="#8a8a8a" /></DropButton>
    </PathBox>
    <IconButton name="pin" />
    <IconButton name="target" />
  </PathBar>
);

const strip: { name: string; on?: boolean; side?: boolean; menu?: boolean }[] = [
  { name: "grid3d", on: true, side: true }, { name: "green", side: true }, { name: "lock" }, { name: "bulbOff" }, { name: "sphere", side: true },
  { name: "bulb", on: true, side: true }, { name: "bulbPlus", side: true }, { name: "bulbBase", side: true }, { name: "ball", on: true, side: true }, { name: "ghost", menu: true },
];
const strip2 = ["point", "normal", "trail", "num", "prim", "primNum", "curve", "hull", "axes", "list"];

const expr = (fn: string, i: number) => `getAlembicTransform("${fn}", ${i})`;

export default function App() {
  return (
    <Shell>
      <GlobalStyle />
      <WindowEdge />
      <TopBar>
        <DesktopPick>
          <Icon name="desktop" />
          <DesktopSelect aria-label="Desktop"><option>Main</option></DesktopSelect>
        </DesktopPick>
        <Stepper type="button" aria-label="Change desktop"><Triangle $dir="up" /><Triangle /></Stepper>
        <Spacer />
        <DesktopPick>
          <Icon name="slate" />
          <DesktopSelect aria-label="Scene"><option>Main</option></DesktopSelect>
        </DesktopPick>
        <Stepper type="button" aria-label="Change scene"><Triangle $dir="up" /><Triangle /></Stepper>
        <HelpSlot><IconButton name="help" /></HelpSlot>
      </TopBar>

      <Shelves>
        <Shelf $w={282}>
          <ShelfHead tabs={leftShelfTabs} />
          <Tools items={leftTools} scroll={14} />
        </Shelf>
        <ShelfSplit><Dots $w={6} $h={15} /></ShelfSplit>
        <Shelf>
          <ShelfHead tabs={rightShelfTabs} active={0} />
          <Tools items={rightTools} />
        </Shelf>
      </Shelves>

      <Workspace>
        <LeftPane>
          <PaneTabs>
            <PaneTab $w={11} $cut><Close type="button" aria-label="Close tab">×</Close></PaneTab>
            <PaneTab $w={90}><button type="button">Geometry S…</button><Close type="button" aria-label="Close Geometry Spreadsheet">×</Close></PaneTab>
            <TabAdd><Plus type="button" aria-label="Add tab" /></TabAdd>
            <PaneMenu><Maximise type="button" aria-label="Maximise pane" /><Triangle $color="#dedede" $size={3} /></PaneMenu>
          </PaneTabs>
          <PathBar $compact>
            <CutPath><DropButton type="button" aria-label="Path history"><Triangle $color="#777" /></DropButton></CutPath>
            <IconButton name="pin" />
            <IconButton name="target" />
            <Spacer />
            <IconButton name="cube" menu />
            <IconButton name="shapes" menu />
            <IconButton name="whiteSquare" menu />
          </PathBar>
          <ViewHeader>
            <IconButton name="people" menu />
            <IconButton name="help" />
          </ViewHeader>
          <ViewRow>
            <View>
              <GroundGrid />
              <ViewPills>
                <Pill type="button" $w={52}>Persp<Triangle $size={3} $color="#fff" /></Pill>
                <Pill type="button" $w={60}>No cam<Triangle $size={3} $color="#fff" /></Pill>
              </ViewPills>
            </View>
            <Strip>
              <StripTop type="button" aria-label="Expand toolbar"><Triangle $dir="right" $color="#000" /></StripTop>
              {strip.map(s => <IconButton key={s.name} name={s.name} on={s.on} side={s.side} menu={s.menu} dark={s.on} />)}
              <StripGap $h={4} />
              {strip2.map(name => <IconButton key={name} name={name} />)}
              <StripText type="button">abc</StripText>
              <IconButton name="photo" on />
              <StripGap $h={10} />
              <IconButton name="marker" on side dark />
            </Strip>
          </ViewRow>
        </LeftPane>

        <VerticalSplit>
          <Triangle $dir="left" $size={3} />
          <Dots $w={5} $h={20} $color="#8a8a8a" />
          <Triangle $dir="right" $size={3} />
        </VerticalSplit>

        <RightColumn>
          <Pane $share={420}>
            <Tabs tabs={[["pCone1", 69], ["Take List", 74], ["Performance Monitor", 122]]} />
            <Path />
            <ParmHeader>
              <IconButton name="alembic" menu />
              <label htmlFor="op-name">Alembic Xform</label>
              <NameInput id="op-name" defaultValue="pCone1" />
              <IconButton name="gear" menu />
              <IconButton name="houdini" menu />
              <IconButton name="search" />
              <IconButton name="info" />
              <IconButton name="help" />
            </ParmHeader>
            <Parms>
              <ParmRow $h={26} $dim>
                <ParmLabel><Check aria-label="Enable display" /><label htmlFor="p-display">Display</label></ParmLabel>
                <Field id="p-display" $tone="off" $w={120} defaultValue="1" disabled />
                <Slider aria-label="Display" defaultValue={100} disabled />
              </ParmRow>
              <ParmRow>
                <ParmLabel><label htmlFor="p-file">File Name</label></ParmLabel>
                <Field id="p-file" $bold defaultValue="F:/CGRnDStudio/cone.abc" />
                <FieldMenu type="button" aria-label="File history"><Triangle /></FieldMenu>
                <IconButton name="fileChooser" />
              </ParmRow>
              <ParmRow>
                <ParmLabel><label htmlFor="p-path">Object Path</label></ParmLabel>
                <Field id="p-path" $bold defaultValue="/pCone1" />
                <FieldMenu type="button" aria-label="Object paths"><Triangle /></FieldMenu>
              </ParmRow>
              <ParmRow>
                <ParmLabel><label htmlFor="p-frame">Frame</label></ParmLabel>
                <Field id="p-frame" $tone="teal" $w={120} $bold defaultValue="81" />
                <Slider aria-label="Frame" defaultValue={100} />
              </ParmRow>
              <ParmRow>
                <ParmLabel><label htmlFor="p-fps">Frames Per Second</label></ParmLabel>
                <Field id="p-fps" $tone="teal" $w={120} defaultValue="24" />
                <Slider aria-label="Frames Per Second" defaultValue={100} />
              </ParmRow>
              <ParmRow $h={20}>
                <ParmLabel />
                <FetchLabel><Check />Fetch World Transform</FetchLabel>
              </ParmRow>
              <ParmRow>
                <ParmLabel $bar><label htmlFor="p-translate">Translate</label></ParmLabel>
                <EditBox>
                  <Field id="p-translate" $tone="edit" defaultValue={expr("translate", 0)} />
                  <Caret />
                </EditBox>
                <Unit>x</Unit>
              </ParmRow>
              {["rotate", "scale"].map(fn => (
                <ParmRow key={fn}>
                  <ParmLabel $bar><label htmlFor={`p-${fn}-0`}>{fn === "rotate" ? "Rotate" : fn}</label></ParmLabel>
                  <Triple>
                    {[0, 1, 2].map(i => (
                      <Field key={i} id={`p-${fn}-${i}`} aria-label={`${fn} ${i}`} $tone="purple" $bold defaultValue={expr(fn, i)} />
                    ))}
                  </Triple>
                </ParmRow>
              ))}
            </Parms>
            <Pointer width="15" height="22" viewBox="0 0 15 22" aria-hidden="true">
              <path d="M1 1v16l4-4 3 7 3-1-3-7h6z" fill="#fff" stroke="#111" />
            </Pointer>
          </Pane>

          <HorizontalSplit>
            <Triangle $dir="up" $size={3} />
            <Dots $w={21} $h={6} $color="#8a8a8a" />
            <Triangle $size={3} />
          </HorizontalSplit>

          <Pane $share={329}>
            <Tabs tabs={[["/obj/cone", 77], ["Tree View", 77], ["Material Palette", 101], ["Asset Browser", 94]]} />
            <Path />
            <MenuRow>
              <MenuGrip type="button" aria-label="Scroll menu"><Triangle $dir="up" $size={3} $color="#000" /></MenuGrip>
              <Menus>
                {["Add", "Edit", "Go", "View", "Tools", "Layout", "Help"].map(m => <button key={m} type="button">{m}</button>)}
              </Menus>
              <IconGroups>
                {[["tools", "tree", "lines"], ["palette", "table"], ["netbox", "note", "image", "box"], ["search", "eye"]].map(g => (
                  <IconGroup key={g[0]}>{g.map(n => <IconButton key={n} name={n} />)}</IconGroup>
                ))}
              </IconGroups>
            </MenuRow>
            <Canvas>
              <SceneMark>Scene</SceneMark>
              <Graph width="96" height="144" viewBox="0 0 96 144" aria-hidden="true">
                <path d="M15 1h60q4 0 4 4v20q0 3-3 4l-31 5-31-5q-3-1-3-4V5q0-4 4-4z" fill="#b2b8b8" />
                <path d="M45 40v52" stroke="#75755a" strokeWidth="1.500" />
                <circle cx="45" cy="40" r="4.300" fill="#b2b8b8" />
                <circle cx="45" cy="92" r="4.300" fill="#b2b8b8" />
                <rect x="6" y="103" width="87" height="27" rx="5" fill="#d8d8d8" />
                <rect x="1" y="98" width="88" height="28" rx="5" fill="#c8c8c8" stroke="#f6c80c" strokeWidth="2.200" />
                <path d="M5 100h8l-3 25H5q-2 0-2-2v-21q0-2 2-2z" fill="#a6e622" />
                <path d="M79 100h6q3 0 3 2v21q0 2-3 2h-9z" fill="#2e8bff" />
                <path d="M13 100l-3 25M79 100l-3 25" stroke="#777" />
                <rect x="3" y="100" width="84" height="25" rx="4" fill="none" stroke="#1a1a1a" strokeWidth="1.200" />
                <g transform="translate(33 99)">
                  <circle cx="12.500" cy="12.500" r="10.500" fill="#080808" />
                  <path d="M3 14c4 3 7 1 10-1s6-1 8 0c0 5-4 9-8 9-5 0-9-3-10-8z" fill="#c0c0c0" />
                  <circle cx="17" cy="8.500" r="1.500" fill="#bbb" />
                  <path d="M4 17c2-3 5-3 6 0s-2 3-2 1M13 20c-2-4 3-7 5-4s-2 4-2 2" stroke="#080808" strokeWidth="1.400" fill="none" />
                </g>
                <circle cx="45" cy="132" r="4.300" fill="#b2b8b8" />
              </Graph>
              <NodeText $x={453} $y={113}><InputNumber>1</InputNumber></NodeText>
              <NodeText $x={501} $y={113}>Sub-Network Input #1</NodeText>
              <NodeText $x={508} $y={187} $dim>Alembic Xform</NodeText>
              <NodeText $x={508} $y={208}>pCone1</NodeText>
              <TimeBadge width="14" height="14" viewBox="0 0 14 14" aria-hidden="true">
                <circle cx="7" cy="7" r="5" fill="#111" stroke="#8fb87a" strokeWidth="1.800" />
                <path d="M7 4v3h-2" stroke="#9fc88a" fill="none" />
              </TimeBadge>
            </Canvas>
          </Pane>
        </RightColumn>
      </Workspace>
    </Shell>
  );
}
